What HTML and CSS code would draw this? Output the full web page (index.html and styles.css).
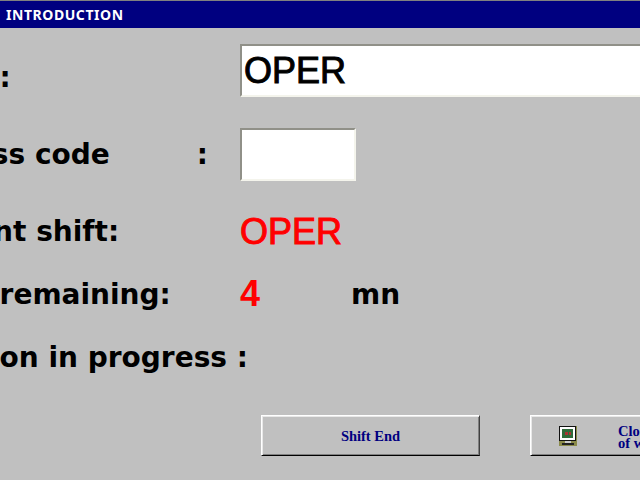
FILE: index.html
```html
<!DOCTYPE html>
<html lang="en">

<head>
    <meta charset="UTF-8">
    <title>Introduction</title>
    <link rel="stylesheet" href="styles.css">
</head>

<body>
    <div class="window">
        <div class="titlebar">INTRODUCTION</div>
        <div class="form">
            <div class="row row-name">
                <span class="label">Name:</span>
                <input class="field field-wide" type="text" value="OPER">
            </div>
            <div class="row row-code">
                <span class="label label-code">Access code<span>:</span></span>
                <input class="field field-short" type="password">
            </div>
            <div class="row row-shift">
                <span class="label">Current shift:</span>
                <span class="value">OPER</span>
            </div>
            <div class="row row-time">
                <span class="label">Time remaining:</span>
                <span class="value value-num">4</span>
                <span class="unit">mn</span>
            </div>
            <div class="row row-op">
                <span class="label">Operation in progress :</span>
            </div>
        </div>
        <div class="buttons">
            <button class="btn btn-shift">Shift End</button>
            <button class="btn btn-close">
                <svg class="icon" width="18" height="20" viewBox="0 0 18 20">
                    <rect width="18" height="20" fill="#8a8a4a"/>
                    <rect x="0" y="0" width="17" height="15" fill="#111"/>
                    <rect x="1" y="1" width="15" height="13" fill="#fff"/>
                    <rect x="3" y="3" width="11" height="9" fill="#2f6b3a"/>
                    <rect x="6" y="6" width="3" height="3" fill="#a33"/>
                    <rect x="10" y="6" width="2" height="3" fill="#a33"/>
                    <rect x="6" y="15" width="6" height="2" fill="#ccc"/>
                    <rect x="3" y="17" width="12" height="2" fill="#222"/>
                </svg>
                <span class="btn-text">Closure<br>of work</span>
            </button>
        </div>
    </div>
</body>

</html>
```
FILE: styles.css
```css
* {
    margin: 0px;
    padding: 0px;
    box-sizing: border-box;
}

html,
body {
    height: 100%;
    overflow: hidden;
}

body {
    background-color: #c0c0c0;
}

.window {
    width: 900px;
    height: 480px;
    margin-left: -94px;
    font-family: "DejaVu Sans", sans-serif;
}

.titlebar {
    height: 28px;
    border-top: 1px solid #808080;
    padding-left: 100px;
    background-color: #000080;
    color: #fff;
    font-family: "Noto Sans", sans-serif;
    font-size: 14px;
    font-weight: bold;
    letter-spacing: 0.55px;
    line-height: 27px;
}

.form {
    padding-top: 16px;
    height: 387px;
}

.row {
    display: flex;
    align-items: center;
}

.label {
    width: 334px;
    flex: none;
    margin-bottom: 1px;
    font-size: 28px;
    font-weight: bold;
    color: #000;
    white-space: nowrap;
}

.label-code {
    display: flex;
    justify-content: space-between;
    padding-left: 12px;
    padding-right: 32px;
}

.field {
    border: 2px solid;
    border-color: #909088 #f4f4ec #f4f4ec #909088;
    background-color: #fff;
    font-family: "Liberation Sans", sans-serif;
    font-size: 36px;
    padding-left: 2px;
    -webkit-text-stroke: 1px #000;
}

.field-wide {
    width: 500px;
    height: 53px;
}

.field-short {
    width: 116px;
    height: 53px;
}

.row-name {
    height: 53px;
}

.row-name .label {
    margin-bottom: 0px;
    padding-top: 14px;
    padding-left: 3px;
}

.row-code {
    height: 53px;
    margin-top: 31px;
}

.row-shift {
    height: 40px;
    margin-top: 31px;
}

.row-time {
    height: 40px;
    margin-top: 23px;
}

.row-time .label {
    padding-left: 7px;
}

.row-op {
    height: 40px;
    margin-top: 23px;
}

.row-op .label {
    margin-left: -25px;
    width: 359px;
}

.value {
    font-family: "Liberation Sans", sans-serif;
    font-size: 36px;
    color: #f00;
    -webkit-text-stroke: 1px #f00;
}

.value-num {
    width: 111px;
    margin-bottom: 2px;
    font-weight: bold;
    -webkit-text-stroke: 0;
}

.unit {
    margin-bottom: 1px;
    font-size: 28px;
    font-weight: bold;
}

.buttons {
    display: flex;
    gap: 50px;
    padding-left: 355px;
}

.btn {
    height: 41px;
    border: 1px solid;
    border-color: #fff #404040 #000 #fff;
    box-shadow: inset 1px 1px 0 #e8e8e8, inset -1px -1px 0 #808080;
    background-color: #c0c0c0;
    color: #000080;
    font-family: "Liberation Serif", serif;
    font-size: 14.5px;
    font-weight: bold;
}

.btn-shift {
    width: 219px;
    padding-top: 2px;
}

.btn-close {
    width: 219px;
    display: flex;
    align-items: center;
    padding-left: 28px;
}

.btn-text {
    margin-left: 41px;
    padding-top: 2px;
    line-height: 12px;
    white-space: nowrap;
}

.icon {
    flex: none;
}
```
